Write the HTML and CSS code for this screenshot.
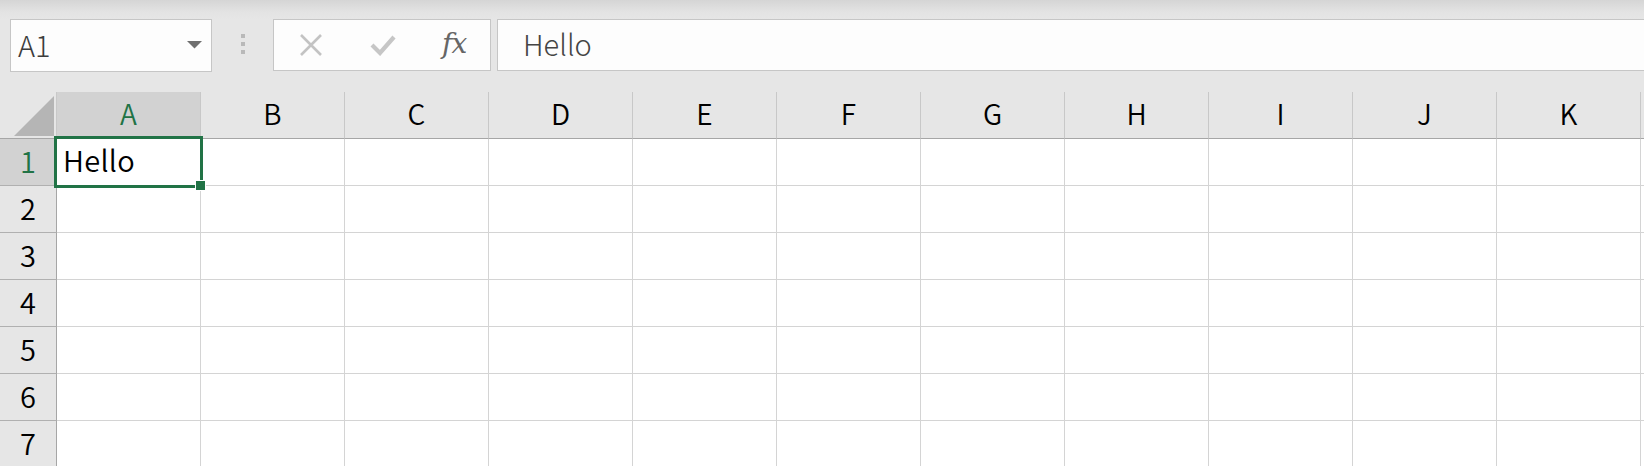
FILE: index.html
```html
<!DOCTYPE html>
<html lang="ja">
<head>
  <meta charset="UTF-8">
  <title>Book1 - Excel</title>
  <link rel="stylesheet" href="styles.css">
</head>
<body>

  <div class="topbar"></div>

  <div class="toolbar">
    <div class="namebox">
      <span>A1</span>
      <svg class="arrow" width="15" height="8" viewBox="0 0 15 8"><polygon points="0,0 15,0 7.5,7.5" fill="#6f6f6f"/></svg>
    </div>
    <div class="grip"><i></i><i></i><i></i></div>
    <div class="fxbuttons">
      <div class="fxbtn">
        <svg width="24" height="22" viewBox="0 0 24 22"><path d="M2 1 L22 21 M22 1 L2 21" stroke="#c3c3c3" stroke-width="2.6" fill="none"/></svg>
      </div>
      <div class="fxbtn">
        <svg width="26" height="22" viewBox="0 0 26 22"><path d="M2 11 L10 19 L24 3" stroke="#c6c6c6" stroke-width="4.2" fill="none"/></svg>
      </div>
      <div class="fxbtn"><span class="fx">fx</span></div>
    </div>
    <div class="formula">Hello</div>
  </div>

  <div class="sheet" id="sheet"></div>

  <script>
    var cols = ["A", "B", "C", "D", "E", "F", "G", "H", "I", "J", "K", ""];
    var sheet = document.getElementById("sheet");

    function cell(cls, text) {
      var d = document.createElement("div");
      d.className = cls;
      if (text) d.textContent = text;
      sheet.appendChild(d);
      return d;
    }

    // header row
    var corner = cell("corner");
    corner.innerHTML = '<svg width="40" height="40" viewBox="0 0 40 40"><polygon points="40,0 40,40 0,40" fill="#b5b5b5"/></svg>';
    cols.forEach(function (c, i) {
      cell("colhead" + (i == 0 ? " active" : ""), c);
    });

    // rows
    for (var r = 1; r <= 7; r++) {
      cell("rowhead" + (r == 1 ? " active" : ""), String(r));
      cols.forEach(function (c, i) {
        var d = cell("cell");
        if (r == 1 && i == 0) {
          d.classList.add("selected");
          d.innerHTML = '<span>Hello</span><i class="handle"></i>';
        }
      });
    }
  </script>
</body>
</html>
```

FILE: styles.css
```css
html, body {
  margin: 0;
  padding: 0;
  overflow: hidden;
}
body {
  background-color: #e6e6e6;
  font-family: "Noto Sans CJK JP", "Noto Sans", sans-serif;
  font-weight: 350;
  color: #000000;
  width: 1644px;
  height: 466px;
}
.topbar {
  height: 19px;
  background: linear-gradient(#d5d5d5, #e3e3e3 12px, #e6e6e6);
}
.toolbar {
  display: flex;
  align-items: flex-start;
  height: 73px;
  padding-left: 10px;
  box-sizing: border-box;
}
.namebox {
  width: 202px;
  height: 53px;
  box-sizing: border-box;
  border: 1px solid #c6c6c6;
  background-color: #fdfdfd;
  display: flex;
  align-items: center;
  justify-content: space-between;
  padding: 0 9px 0 7px;
  font-size: 29px;
  font-weight: 300;
  color: #3c3c3c;
}
.namebox span {
  margin-bottom: 3px;
}
.arrow {
  margin-bottom: 2px;
}
.grip {
  width: 61px;
  display: flex;
  flex-direction: column;
  align-items: center;
  gap: 4px;
  padding-top: 15px;
}
.grip i {
  width: 4px;
  height: 4px;
  background-color: #b9b9b9;
}
.fxbuttons {
  width: 218px;
  height: 52px;
  box-sizing: border-box;
  border: 1px solid #c6c6c6;
  background-color: #fdfdfd;
  display: flex;
  padding-left: 1px;
}
.fxbtn {
  width: 72px;
  display: flex;
  align-items: center;
  justify-content: center;
}
.fx {
  font-family: "DejaVu Serif", serif;
  font-style: italic;
  font-weight: normal;
  font-size: 28px;
  color: #666666;
  margin-bottom: 4px;
  letter-spacing: -1px;
}
.formula {
  flex: 1;
  margin-left: 6px;
  margin-right: -2px;
  height: 52px;
  box-sizing: border-box;
  border: 1px solid #c6c6c6;
  background-color: #fdfdfd;
  display: flex;
  align-items: center;
  padding: 0 0 4px 25px;
  font-size: 29px;
  font-weight: 300;
  color: #444444;
}
.sheet {
  display: grid;
  grid-template-columns: 57px repeat(11, 144px) 1fr;
  grid-auto-rows: 47px;
  background-color: #ffffff;
}
.corner, .colhead, .rowhead, .cell {
  box-sizing: border-box;
  border-right: 1px solid #d4d4d4;
  border-bottom: 1px solid #d4d4d4;
}
.corner {
  background-color: #e6e6e6;
  border-right-color: #c8c8c8;
  border-bottom-color: #a6a6a6;
  display: flex;
  align-items: flex-end;
  justify-content: flex-end;
  padding: 0 2px 2px 0;
}
.colhead {
  background-color: #e6e6e6;
  border-right-color: #c8c8c8;
  border-bottom-color: #a6a6a6;
  font-size: 28px;
  display: flex;
  justify-content: center;
  align-items: center;
  padding-bottom: 4px;
}
.rowhead {
  background-color: #e6e6e6;
  border-right-color: #a6a6a6;
  border-bottom-color: #b0b0b0;
  font-size: 29px;
  display: flex;
  justify-content: center;
  align-items: center;
  padding-bottom: 5px;
}
.colhead.active, .rowhead.active {
  background-color: #d2d2d2;
  color: #217346;
}
.cell {
  font-size: 29px;
  display: flex;
  align-items: flex-end;
  padding: 0 0 5px 6px;
  letter-spacing: 0.3px;
}
.selected {
  position: relative;
}
.selected::after {
  content: "";
  position: absolute;
  left: -3px;
  top: -3px;
  right: -3px;
  bottom: -3px;
  border: 3px solid #217346;
}
.handle {
  position: absolute;
  right: -5px;
  bottom: -5px;
  width: 9px;
  height: 9px;
  background-color: #217346;
  outline: 1px solid #ffffff;
  z-index: 1;
}
```
